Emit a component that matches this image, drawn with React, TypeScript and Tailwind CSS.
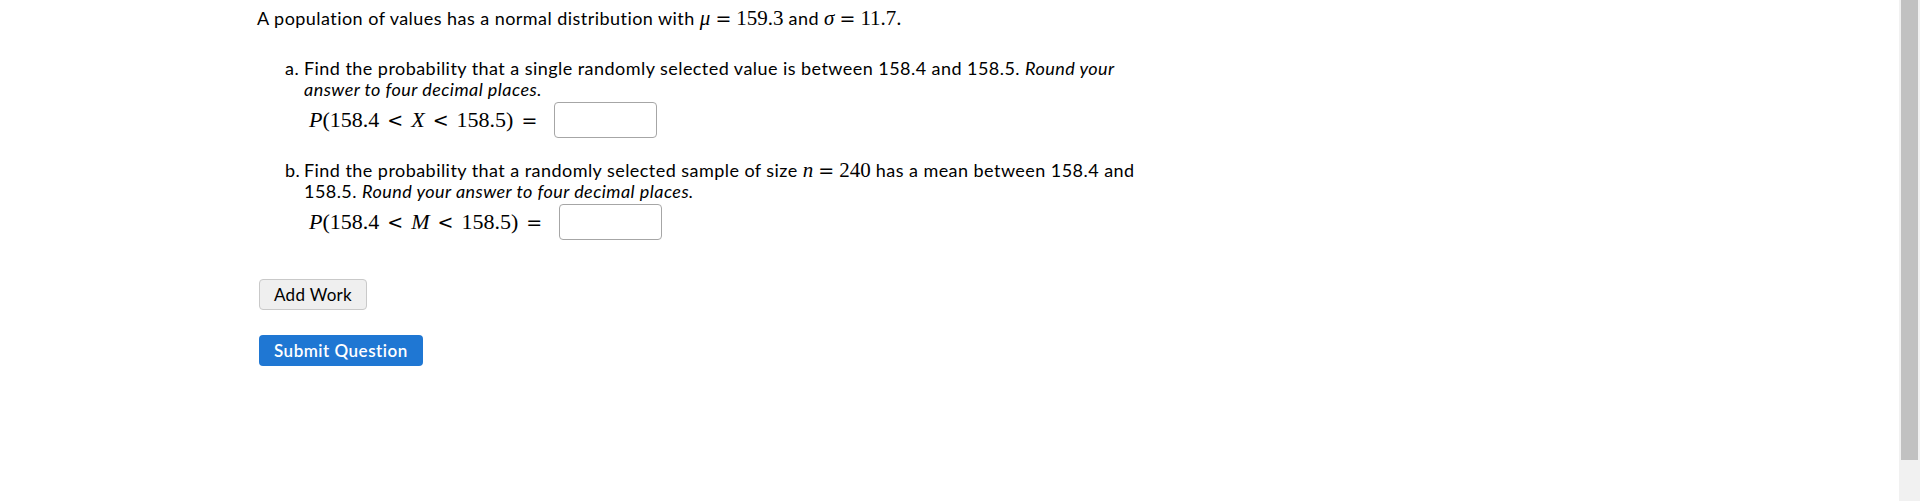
import React from 'react';

const serif = { fontFamily: '"Liberation Serif", "DejaVu Serif", serif' };
const sym = { fontFamily: '"DejaVu Sans", sans-serif' };

function Rel({ children, wide }: { children: React.ReactNode; wide?: boolean }) {
  return (
    <span
      className={wide ? 'mx-[8px] not-italic text-[19px]' : 'mx-[5px] not-italic text-[19px]'}
      style={sym}
    >
      {children}
    </span>
  );
}

function MathP({ v }: { v: string }) {
  return (
    <span className="text-[22px] whitespace-nowrap tracking-normal" style={serif}>
      <span className="italic">P</span>(158.4
      <Rel wide>&lt;</Rel>
      <span className="italic">{v}</span>
      <Rel wide>&lt;</Rel>
      158.5)
      <Rel wide>=</Rel>
    </span>
  );
}

function AnswerRow({ v }: { v: string }) {
  return (
    <div className="flex items-center gap-[9px] mt-[2px] pl-[5px]">
      <MathP v={v} />
      <input
        type="text"
        className="w-[103px] h-[36px] rounded-[4px] border border-[#a6a6a6] bg-white outline-none"
      />
    </div>
  );
}

function Part({ label, children }: { label: string; children: React.ReactNode }) {
  return (
    <div className="flex">
      <div className="w-[19px] shrink-0">{label}</div>
      <div className="w-[845px]">{children}</div>
    </div>
  );
}

export default function App() {
  return (
    <div className="flex h-[501px] w-full bg-white overflow-hidden">
      <div
        className="flex-1 pl-[257px] pt-[8px] text-[18px] leading-[21px] tracking-[0.45px] text-black"
        style={{ fontFamily: 'Lato, "Open Sans", sans-serif' }}
      >
        <p>
          A population of values has a normal distribution with{' '}
          <span className="text-[21px] tracking-normal" style={serif}>
            <span className="italic">μ</span>
            <Rel>=</Rel>159.3
          </span>{' '}
          and{' '}
          <span className="text-[21px] tracking-normal" style={serif}>
            <span className="italic">σ</span>
            <Rel>=</Rel>11.7.
          </span>
        </p>

        <div className="pl-[28px] mt-[29px]">
          <Part label="a.">
            <p>
              Find the probability that a single randomly selected value is between 158.4 and
              158.5. <i>Round your answer to four decimal places.</i>
            </p>
            <AnswerRow v="X" />
          </Part>

          <div className="mt-[22px]">
            <Part label="b.">
              <p>
                Find the probability that a randomly selected sample of size{' '}
                <span className="text-[21px] tracking-normal" style={serif}>
                  <span className="italic">n</span>
                  <Rel>=</Rel>240
                </span>{' '}
                has a mean between 158.4 and 158.5. <i>Round your answer to four decimal places.</i>
              </p>
              <AnswerRow v="M" />
            </Part>
          </div>
        </div>

        <div className="mt-[39px] ml-[2px] flex flex-col items-start gap-[25px]">
          <button className="h-[31px] px-[14px] rounded-[4px] border border-[#c9c9c9] bg-[#efefef] text-[17px] tracking-[0.3px] text-black">
            Add Work
          </button>
          <button className="h-[31px] px-[15px] rounded-[4px] bg-[#1f77d3] text-[17px] tracking-[0.5px] font-semibold text-white">
            Submit Question
          </button>
        </div>
      </div>

      <div className="w-[21px] shrink-0 bg-[#f1f1f1] pl-[2px] pr-[2px]">
        <div className="h-[460px] bg-[#c1c1c1]" />
      </div>
    </div>
  );
}
